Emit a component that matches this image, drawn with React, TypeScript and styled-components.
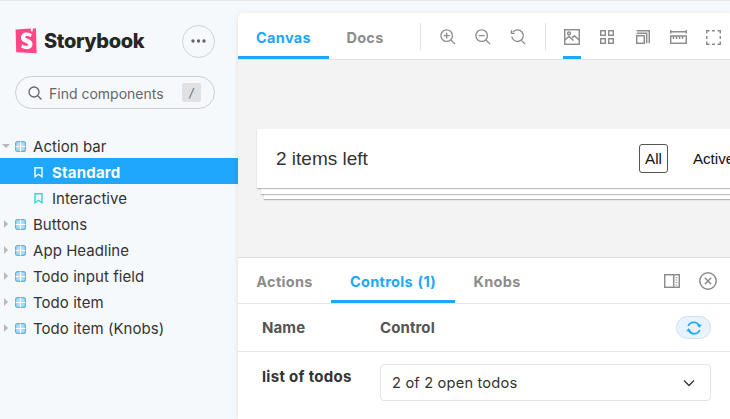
import React from "react";
import styled, { createGlobalStyle } from "styled-components";

const Global = createGlobalStyle`
  html, body { margin: 0; padding: 0; width: 730px; height: 419px; overflow: hidden; }
  #root { width: 730px; height: 419px; }
  * { box-sizing: border-box; }
`;

const Shell = styled.div`
  display: flex;
  width: 730px;
  height: 419px;
  overflow: hidden;
  background: #f6f9fc;
  border-top: 1px solid #e3e7eb;
  font-family: Inter, "Noto Sans", sans-serif;
  color: #333;
`;

const Sidebar = styled.aside`
  width: 238px;
  flex: none;
  padding-top: 23px;
`;

const Brand = styled.div`
  display: flex;
  align-items: center;
  justify-content: space-between;
  padding: 0 23px 0 15px;
  height: 34px;
`;

const Logo = styled.div`
  display: flex;
  align-items: center;
  gap: 7px;
  font-size: 20px;
  font-weight: 800;
  letter-spacing: -0.35px;
  color: #262626;
`;

const RoundButton = styled.button`
  width: 33px;
  height: 33px;
  padding: 0;
  border-radius: 50%;
  border: 1px solid #cfd3d7;
  background: #f6f9fc;
  display: flex;
  align-items: center;
  justify-content: center;
`;

const Search = styled.div`
  margin: 18px 23px 0 15px;
  height: 33px;
  border: 1px solid #c9cdd1;
  border-radius: 17px;
  display: flex;
  align-items: center;
  padding: 0 13px 0 12px;
  font-size: 14px;
  color: #666;
`;

const SearchLabel = styled.span`
  flex: 1;
  margin-left: 7px;
  padding-top: 2px;
`;

const Kbd = styled.span`
  width: 19px;
  height: 19px;
  border-radius: 2px;
  background: #dfe1e3;
  color: #666;
  font-size: 12px;
  font-style: italic;
  display: flex;
  align-items: center;
  justify-content: center;
`;

const Tree = styled.nav`
  margin-top: 23px;
`;

const Row = styled.div<{ $child?: boolean; $active?: boolean }>`
  height: 26px;
  display: flex;
  align-items: center;
  padding-left: ${(p) => (p.$child ? "34px" : "2px")};
  padding-top: 2px;
  gap: ${(p) => (p.$child ? "9px" : "0")};
  font-size: 15px;
  letter-spacing: ${(p) => (p.$active ? "0.2px" : "0.05px")};
  font-weight: ${(p) => (p.$active ? 700 : 400)};
  color: ${(p) => (p.$active ? "#fff" : "#333")};
  background: ${(p) => (p.$active ? "#1ea7fd" : "transparent")};
`;

const RowLabel = styled.span`
  margin-left: 7px;
`;

const Caret = styled.span<{ $open?: boolean }>`
  width: 0;
  height: 0;
  flex: none;
  margin-right: ${(p) => (p.$open ? "5px" : "7px")};
  ${(p) =>
    p.$open
      ? "border-left: 4px solid transparent; border-right: 4px solid transparent; border-top: 4px solid #b5b9bd;"
      : "border-top: 4px solid transparent; border-bottom: 4px solid transparent; border-left: 4px solid #b5b9bd; margin-left: 2px;"}
`;

const Main = styled.main`
  flex: 1;
  min-width: 0;
  margin-top: 12px;
  display: flex;
  flex-direction: column;
  background: #fff;
  border-radius: 5px 0 0 0;
  box-shadow: 0 1px 5px rgba(0, 0, 0, 0.1);
  overflow: hidden;
`;

const Toolbar = styled.div`
  height: 47px;
  flex: none;
  display: flex;
  align-items: stretch;
  border-bottom: 1px solid #e2e2e2;
`;

const Tab = styled.div<{ $active?: boolean; $w: number }>`
  width: ${(p) => p.$w}px;
  flex: none;
  display: flex;
  align-items: center;
  justify-content: center;
  font-size: 14.5px;
  font-weight: 700;
  letter-spacing: 0.3px;
  padding-top: 2px;
  color: ${(p) => (p.$active ? "#1ea7fd" : "#8c8c8c")};
  box-shadow: ${(p) => (p.$active ? "inset 0 -3px 0 #1ea7fd" : "none")};
`;

const Divider = styled.span`
  width: 1px;
  height: 27px;
  flex: none;
  align-self: center;
  background: #e2e2e2;
`;

const ToolIcon = styled.div<{ $w: number; $active?: boolean }>`
  width: ${(p) => p.$w}px;
  flex: none;
  display: flex;
  align-items: center;
  justify-content: center;
  padding-top: 2px;
  position: relative;
  &::after {
    content: "";
    display: ${(p) => (p.$active ? "block" : "none")};
    position: absolute;
    bottom: 0;
    left: 50%;
    width: 18px;
    margin-left: -9px;
    height: 3px;
    background: #1ea7fd;
  }
`;

const Canvas = styled.section`
  height: 197px;
  flex: none;
  background: #f3f3f3;
  padding: 69px 0 0 19px;
  overflow: hidden;
`;

const CardStack = styled.div`
  position: relative;
  z-index: 0;
`;

const Card = styled.div`
  position: relative;
  width: 620px;
  height: 59px;
  background: #fff;
  box-shadow: 0 1px 1px rgba(0, 0, 0, 0.25);
  display: flex;
  align-items: center;
  padding: 0 19px;
  font-family: "Liberation Sans", Arial, sans-serif;
  &::before, &::after {
    content: "";
    position: absolute;
    background: #fff;
    box-shadow: 0 1px 1px rgba(0, 0, 0, 0.25);
    z-index: -1;
  }
  &::before { left: 4px; right: -4px; top: 4px; bottom: -6px; }
  &::after { left: 7px; right: -7px; top: 8px; bottom: -11px; z-index: -2; }
`;

const Left = styled.span`
  font-size: 19px;
  color: #333;
  width: 363px;
  flex: none;
`;

const Filter = styled.span<{ $selected?: boolean }>`
  flex: none;
  font-size: 15.2px;
  color: #111;
  height: 29px;
  display: flex;
  align-items: center;
  padding: 0 5px;
  margin-right: 19px;
  border-radius: 3px;
  border: 1px solid ${(p) => (p.$selected ? "#555" : "transparent")};
`;

const Panel = styled.section`
  flex: 1;
  min-height: 0;
  background: #fff;
  border-top: 1px solid #dedede;
`;

const PanelTabs = styled.div`
  height: 46px;
  display: flex;
  align-items: stretch;
  border-bottom: 1px solid #e6e6e6;
  padding-right: 8px;
`;

const PanelTab = styled(Tab)`
  padding-top: 1px;
  word-spacing: 1px;
`;

const Spacer = styled.div`
  flex: 1;
`;

const TabGap = styled.div`
  flex: 0 0 19px;
`;

const PanelAction = styled.div<{ $w: number }>`
  width: ${(p) => p.$w}px;
  display: flex;
  align-items: center;
  justify-content: center;
`;

const Head = styled.div`
  display: grid;
  grid-template-columns: 118px 1fr auto;
  align-items: center;
  height: 48px;
  padding: 0 19px 0 24px;
  border-bottom: 1px solid #e6e6e6;
  font-size: 15px;
  letter-spacing: 0.1px;
  font-weight: 700;
  color: #555;
`;

const ResetButton = styled.button`
  width: 35px;
  height: 23px;
  padding: 0;
  border-radius: 12px;
  border: 1px solid #cfe0ee;
  background: #e8f3fc;
  display: flex;
  align-items: center;
  justify-content: center;
`;

const Body = styled.div`
  display: grid;
  grid-template-columns: 118px 1fr;
  padding: 12px 19px 0 24px;
`;

const ArgName = styled.div`
  font-size: 15px;
  font-weight: 700;
  letter-spacing: 0.3px;
  color: #333;
  padding-top: 3px;
`;

const Select = styled.div`
  height: 37px;
  border: 1px solid #e3e3e3;
  border-radius: 4px;
  display: flex;
  align-items: center;
  justify-content: space-between;
  padding: 0 15px 0 11px;
  font-size: 14.7px;
  letter-spacing: 0.15px;
  color: #333;
`;

const stroke = { fill: "none", stroke: "#8c8c8c", strokeWidth: 1.5 };

const ZoomIn = () => (
  <svg width="16" height="16" viewBox="0 0 18 18" {...stroke}>
    <circle cx="7.5" cy="7.5" r="6.5" />
    <path d="M12.3 12.3 17 17M7.5 4.2v6.6M4.2 7.5h6.6" />
  </svg>
);
const ZoomOut = () => (
  <svg width="16" height="16" viewBox="0 0 18 18" {...stroke}>
    <circle cx="7.5" cy="7.5" r="6.5" />
    <path d="M12.3 12.3 17 17M4.2 7.5h6.6" />
  </svg>
);
const ZoomReset = () => (
  <svg width="16" height="16" viewBox="0 0 18 18" {...stroke}>
    <path d="M3.2 3.6A6.5 6.5 0 1 1 2 8.5" />
    <path d="M1.6 1.4v3.6h3.6M12.8 12.8 17 17" />
  </svg>
);
const Photo = () => (
  <svg width="16" height="16" viewBox="0 0 16 16" {...stroke}>
    <rect x=".7" y=".7" width="14.6" height="14.6" />
    <circle cx="5" cy="4.5" r="1.4" />
    <path d="M.7 11 5 7.5l4.5 4M8 8.5l2.5-1.5 4.8 4" />
  </svg>
);
const Grid = () => (
  <svg width="14" height="14" viewBox="0 0 14 14" {...stroke}>
    <rect x=".7" y=".7" width="4.6" height="4.6" />
    <rect x="8.7" y=".7" width="4.6" height="4.6" />
    <rect x=".7" y="8.7" width="4.6" height="4.6" />
    <rect x="8.7" y="8.7" width="4.6" height="4.6" />
  </svg>
);
const Outline = () => (
  <svg width="14" height="14" viewBox="0 0 14 14" {...stroke}>
    <rect x=".7" y="5.7" width="7.6" height="7.6" />
    <path d="M.7 3.2h10v10M.7.7h12.6v12.6" />
  </svg>
);
const Ruler = () => (
  <svg width="17" height="14" viewBox="0 0 17 14" {...stroke}>
    <path d="M.7 0v3.5M16.3 0v3.5M.7 1.8h15.6" />
    <rect x=".7" y="6" width="15.6" height="7.3" />
    <path d="M3.5 6v3M6.5 6v3M9.5 6v3M12.5 6v3" />
  </svg>
);
const Dashed = () => (
  <svg width="15" height="15" viewBox="0 0 15 15" {...stroke}>
    <path d="M.7 3.5V.7h2.8M11.5.7h2.8v2.8M14.3 11.500v2.8h-2.8M3.5 14.3H.7v-2.8M6 .7h3M6 14.3h3M.7 6v3M14.3 6v3" />
  </svg>
);
const SidePanel = () => (
  <svg width="16" height="14" viewBox="0 0 16 14" {...stroke}>
    <rect x=".7" y=".7" width="14.6" height="12.6" />
    <path d="M9.7.7v12.6" />
    <path d="M12.5 3v1M12.5 5.5v1M12.5 8v1M12.5 10.5v1" />
  </svg>
);
const CloseCircle = () => (
  <svg width="18" height="18" viewBox="0 0 18 18" {...stroke}>
    <circle cx="9" cy="9" r="8.2" />
    <path d="m5.8 5.8 6.4 6.4M12.2 5.8l-6.4 6.4" />
  </svg>
);
const Sync = () => (
  <svg width="16" height="16" viewBox="0 0 16 16" fill="none" stroke="#1ea7fd" strokeWidth="1.7">
    <path d="M2.2 6A6.1 6.1 0 0 1 13.2 5.5" />
    <path d="M13.8 10A6.1 6.1 0 0 1 2.8 10.5" />
    <path d="M16 4.800h-5.200l2.600 3zM0 11.200h5.200l-2.600-3z" fill="#1ea7fd" stroke="none" />
  </svg>
);
const Chevron = () => (
  <svg width="12" height="8" viewBox="0 0 12 8" fill="none" stroke="#333" strokeWidth="1.3">
    <path d="m1 1.5 5 5 5-5" />
  </svg>
);
const SearchIcon = () => (
  <svg width="14" height="14" viewBox="0 0 14 14" fill="none" stroke="#666" strokeWidth="1.3">
    <circle cx="6" cy="6" r="5" />
    <path d="m9.7 9.7 3.8 3.8" />
  </svg>
);
const Dots = () => (
  <svg width="15" height="4" viewBox="0 0 15 4" fill="#666">
    <circle cx="2" cy="2" r="1.7" />
    <circle cx="7.5" cy="2" r="1.7" />
    <circle cx="13" cy="2" r="1.7" />
  </svg>
);
const BrandMark = () => (
  <svg width="22" height="26" viewBox="0 0 22 26">
    <path d="M.6 1.6 16 .6l-.2 2.6 1.8.2.2-2.9L21 .2l.6 25-20.400-.9z" fill="#ff4785" />
    <path
      d="M6 9.800c0-3.400 2.500-5.200 5.400-5.200 2.500 0 4.500.8 5.300 1.400l-.9 3.200c-1-.6-2.600-1.200-4-1.200-1 0-1.600.3-1.600 1 0 2 7.300 1.700 7.300 7 0 3.600-2.800 5.200-5.700 5.200-2.500 0-4.600-.8-5.700-1.600l1-3.400c1.200.9 3 1.600 4.400 1.600 1.100 0 1.800-.4 1.800-1.300C11.300 14 6 14.800 6 9.800z"
      fill="#fff"
    />
  </svg>
);
const Component = () => (
  <svg width="11" height="11" viewBox="0 0 11 11" style={{ flex: "none" }}>
    <rect x=".6" y=".6" width="9.8" height="9.8" rx="2" fill="#a9dcfd" stroke="#4fb6f8" strokeWidth="1.2" />
    <path d="M5.500.6v9.800M.6 5.500h9.800" stroke="#fff" strokeWidth="1.2" />
  </svg>
);
const Bookmark = ({ color }: { color: string }) => (
  <svg width="9" height="11" viewBox="0 0 9 11" fill="none" stroke={color} strokeWidth="1.4" style={{ flex: "none" }}>
    <path d="M1 .8h7v9L4.5 7.300 1 9.800z" />
  </svg>
);

const components = ["Buttons", "App Headline", "Todo input field", "Todo item", "Todo item (Knobs)"];

export default function App() {
  return (
    <>
      <Global />
      <Shell>
        <Sidebar>
          <Brand>
            <Logo>
              <BrandMark />
              <span>Storybook</span>
            </Logo>
            <RoundButton aria-label="menu">
              <Dots />
            </RoundButton>
          </Brand>
          <Search>
            <SearchIcon />
            <SearchLabel>Find components</SearchLabel>
            <Kbd>/</Kbd>
          </Search>
          <Tree>
            <Row>
              <Caret $open />
              <Component />
              <RowLabel>Action bar</RowLabel>
            </Row>
            <Row $child $active>
              <Bookmark color="#fff" />
              <span>Standard</span>
            </Row>
            <Row $child>
              <Bookmark color="#37d5d3" />
              <span>Interactive</span>
            </Row>
            {components.map((c) => (
              <Row key={c}>
                <Caret />
                <Component />
                <RowLabel>{c}</RowLabel>
              </Row>
            ))}
          </Tree>
        </Sidebar>
        <Main>
          <Toolbar>
            <Tab $active $w={91}>Canvas</Tab>
            <Tab $w={72}>Docs</Tab>
            <TabGap />
            <Divider />
            <ToolIcon $w={54}><ZoomIn /></ToolIcon>
            <ToolIcon $w={16}><ZoomOut /></ToolIcon>
            <ToolIcon $w={54}><ZoomReset /></ToolIcon>
            <Divider />
            <ToolIcon $w={52} $active><Photo /></ToolIcon>
            <ToolIcon $w={18}><Grid /></ToolIcon>
            <ToolIcon $w={53}><Outline /></ToolIcon>
            <ToolIcon $w={18}><Ruler /></ToolIcon>
            <ToolIcon $w={52}><Dashed /></ToolIcon>
          </Toolbar>
          <Canvas>
            <CardStack>
              <Card>
                <Left>2 items left</Left>
                <Filter $selected>All</Filter>
                <Filter>Active</Filter>
              </Card>
            </CardStack>
          </Canvas>
          <Panel>
            <PanelTabs>
              <PanelTab $w={93}>Actions</PanelTab>
              <PanelTab $active $w={124}>Controls (1)</PanelTab>
              <PanelTab $w={84}>Knobs</PanelTab>
              <Spacer />
              <PanelAction $w={44}><SidePanel /></PanelAction>
              <PanelAction $w={28}><CloseCircle /></PanelAction>
            </PanelTabs>
            <Head>
              <span>Name</span>
              <span>Control</span>
              <ResetButton aria-label="reset"><Sync /></ResetButton>
            </Head>
            <Body>
              <ArgName>list of todos</ArgName>
              <Select>
                <span>2 of 2 open todos</span>
                <Chevron />
              </Select>
            </Body>
          </Panel>
        </Main>
      </Shell>
    </>
  );
}
